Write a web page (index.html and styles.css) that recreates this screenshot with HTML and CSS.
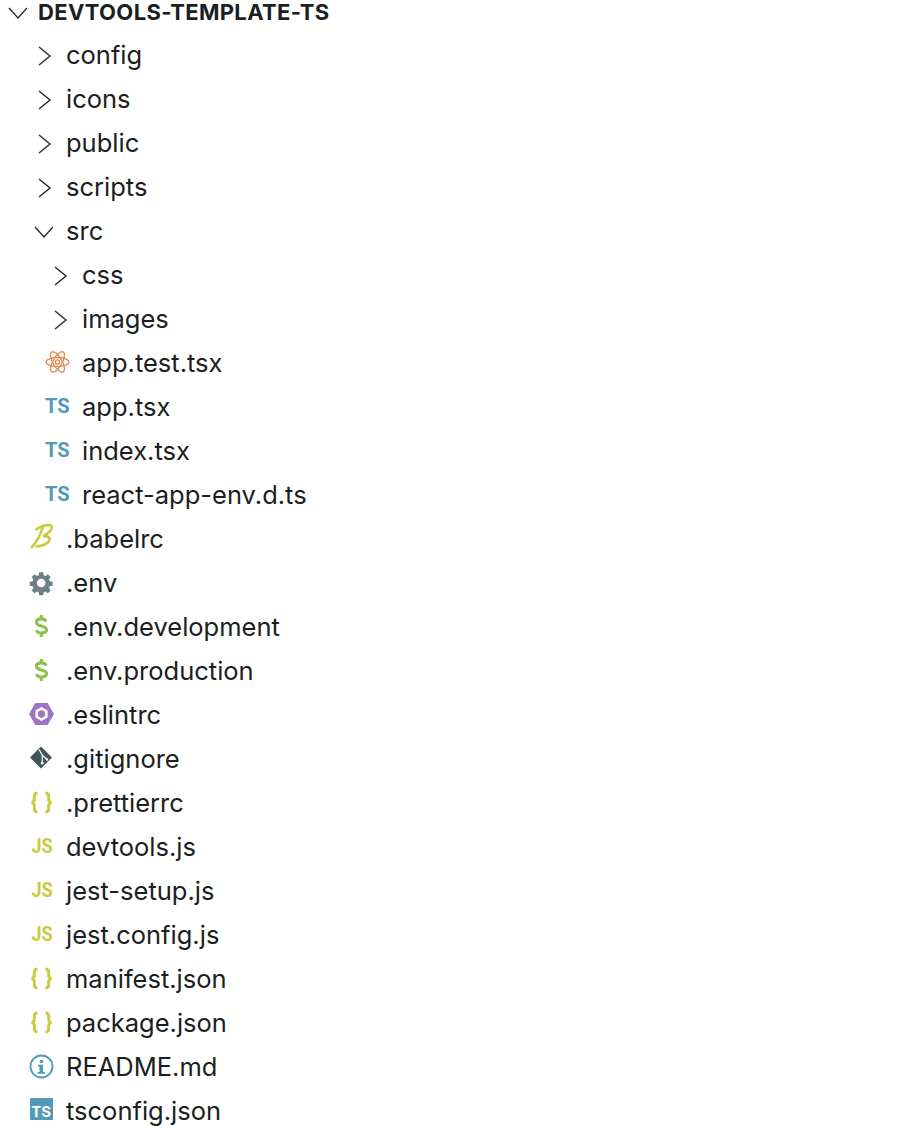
FILE: index.html
```html
<!DOCTYPE html>
<html>

<head>
  <title>Explorer</title>
  <link rel="stylesheet" href="styles.css">
</head>

<body>
  <svg class="defs" width="0" height="0">
    <symbol id="closed" viewBox="0 0 16 24"><path d="M3 4l11 9-11 9" fill="none" stroke="currentColor" stroke-width="1.500"/></symbol>
    <symbol id="open" viewBox="0 0 20 16"><path d="M2 4l9 10 9-10" fill="none" stroke="currentColor" stroke-width="1.500"/></symbol>
    <symbol id="braces" viewBox="0 0 24 24"><path d="M8.500 2c-2.600 0-3.200 1.200-3.200 3.200v3.300c0 1.800-.8 2.600-2.700 3 1.900.4 2.700 1.200 2.700 3v3.300c0 2 .6 3.200 3.200 3.200M16.500 2c2.600 0 3.200 1.200 3.200 3.200v3.300c0 1.800.8 2.600 2.700 3-1.900.4-2.700 1.200-2.700 3v3.300c0 2-.6 3.200-3.200 3.200" fill="none" stroke="#cbcb41" stroke-width="2.900"/></symbol>
    <symbol id="dollar" viewBox="0 0 24 24"><path d="M17 6.500c-.6-1.800-2.500-2.600-4.700-2.600-2.700 0-4.800 1.200-4.800 3.500 0 4.700 10 2.300 10 7.200 0 2.200-2.100 3.500-5 3.500-2.500 0-4.500-1-5.100-3M12.300 0v3.900M12.300 18.100v3.900" fill="none" stroke="#8dc149" stroke-width="3.100"/></symbol>
  </svg>

  <div class="tree">
    <div class="root">
      <svg class="arrow arrow--open"><use href="#open"/></svg>
      <span>DEVTOOLS-TEMPLATE-TS</span>
    </div>

    <div class="row"><svg class="arrow"><use href="#closed"/></svg><span class="name">config</span></div>
    <div class="row"><svg class="arrow"><use href="#closed"/></svg><span class="name">icons</span></div>
    <div class="row"><svg class="arrow"><use href="#closed"/></svg><span class="name">public</span></div>
    <div class="row"><svg class="arrow"><use href="#closed"/></svg><span class="name">scripts</span></div>
    <div class="row"><svg class="arrow arrow--open"><use href="#open"/></svg><span class="name">src</span></div>

    <div class="row row--sub"><svg class="arrow"><use href="#closed"/></svg><span class="name">css</span></div>
    <div class="row row--sub"><svg class="arrow"><use href="#closed"/></svg><span class="name">images</span></div>
    <div class="row row--sub">
      <svg class="icon" viewBox="0 0 24 24" fill="none" stroke="#e58a50" stroke-width="1.300">
        <ellipse cx="12.500" cy="11" rx="11.500" ry="4.500"/>
        <ellipse cx="12.500" cy="11" rx="11.500" ry="4.500" transform="rotate(60 12.500 11)"/>
        <ellipse cx="12.500" cy="11" rx="11.500" ry="4.500" transform="rotate(120 12.500 11)"/>
        <circle cx="12.500" cy="11" r="2.200"/>
      </svg>
      <span class="name">app.test.tsx</span>
    </div>
    <div class="row row--sub"><b class="badge badge--ts">TS</b><span class="name">app.tsx</span></div>
    <div class="row row--sub"><b class="badge badge--ts">TS</b><span class="name">index.tsx</span></div>
    <div class="row row--sub"><b class="badge badge--ts">TS</b><span class="name">react-app-env.d.ts</span></div>

    <div class="row">
      <svg class="icon" viewBox="0 0 24 24" fill="none" stroke="#cbcb41" stroke-width="2.700">
        <path d="M2 21C7 16 12 7 14.500-2M6.500 3C11-.5 17-2 21-1.800c2.500.5 2 4-.5 6.500-2 2-4.500 3.500-6.500 4.700 3-.8 6.500 0 6.500 2.800 0 3.500-7 7.500-14 7.300"/>
      </svg>
      <span class="name">.babelrc</span>
    </div>
    <div class="row">
      <svg class="icon" viewBox="0 0 24 24">
        <path fill="#6d8086" fill-rule="evenodd" d="M10.200 1.200h4l.5 3 1.700.7 2.500-1.700 2.800 2.800-1.700 2.500.7 1.700 3 .5v4l-3 .5-.7 1.700 1.700 2.500-2.800 2.800-2.500-1.700-1.700.7-.5 3h-4l-.5-3-1.700-.7-2.500 1.700-2.800-2.800 1.700-2.500-.7-1.700-3-.5v-4l3-.5.7-1.700-1.700-2.500 2.800-2.800 2.500 1.700 1.700-.7zM12.200 7.700a4.300 4.300 0 1 0 0 8.600 4.300 4.300 0 0 0 0-8.600z"/>
      </svg>
      <span class="name">.env</span>
    </div>
    <div class="row"><svg class="icon"><use href="#dollar"/></svg><span class="name">.env.development</span></div>
    <div class="row"><svg class="icon"><use href="#dollar"/></svg><span class="name">.env.production</span></div>
    <div class="row">
      <svg class="icon" viewBox="0 0 24 24">
        <path fill="#a074c4" fill-rule="evenodd" d="M6.300 0h12.400l6.300 11-6.300 11H6.300L0 11zM12.500 4L6.400 7.500v7l6.100 3.500 6.100-3.500v-7z"/>
        <path fill="#a074c4" d="M12.500 6.800l3.600 2.100v4.200l-3.600 2.100-3.600-2.100V8.900z"/>
      </svg>
      <span class="name">.eslintrc</span>
    </div>
    <div class="row">
      <svg class="icon" viewBox="0 0 24 24">
        <path fill="#41535b" d="M12 -.5L23 10.500 12 21.500 1 10.500z"/>
        <path fill="none" stroke="#fff" stroke-width="1.200" d="M10 2.500l3.200 5.500v8M13.200 8l4.800 4.500"/>
        <circle cx="13.200" cy="16" r="1.500" fill="#fff"/>
        <circle cx="18" cy="12.500" r="1.200" fill="#fff"/>
      </svg>
      <span class="name">.gitignore</span>
    </div>
    <div class="row"><svg class="icon"><use href="#braces"/></svg><span class="name">.prettierrc</span></div>
    <div class="row"><b class="badge badge--js">JS</b><span class="name">devtools.js</span></div>
    <div class="row"><b class="badge badge--js">JS</b><span class="name">jest-setup.js</span></div>
    <div class="row"><b class="badge badge--js">JS</b><span class="name">jest.config.js</span></div>
    <div class="row"><svg class="icon"><use href="#braces"/></svg><span class="name">manifest.json</span></div>
    <div class="row"><svg class="icon"><use href="#braces"/></svg><span class="name">package.json</span></div>
    <div class="row">
      <svg class="icon" viewBox="0 0 24 24">
        <circle cx="12.500" cy="11.500" r="11" fill="none" stroke="#519aba" stroke-width="1.800"/>
        <circle cx="12.500" cy="6.500" r="1.800" fill="#519aba"/>
        <path fill="#519aba" d="M9 9.700h5v7.300h2v1.700H8.500V17h2v-5.600H9z"/>
      </svg>
      <span class="name">README.md</span>
    </div>
    <div class="row">
      <span class="tsbox">TS</span>
      <span class="name">tsconfig.json</span>
    </div>
  </div>
</body>

</html>
```

FILE: styles.css
```css
body {
  margin: 0;
  background: #fff;
  color: #1b1e22;
  font-family: Inter, sans-serif;
  font-size: 25.5px;
}

.defs {
  position: absolute;
}

.tree {
  display: flex;
  flex-direction: column;
  height: 1132px;
  overflow: hidden;
}

.root {
  display: flex;
  align-items: center;
  height: 24px;
  margin-bottom: 9px;
  padding-left: 7px;
  font-size: 22px;
  font-weight: 700;
  letter-spacing: .35px;
}

.root .arrow {
  margin-right: 11px;
}

.row {
  display: flex;
  align-items: center;
  flex: none;
  height: 44px;
  padding-left: 29px;
}

.row--sub {
  padding-left: 45px;
}

.name {
  padding-bottom: 2px;
}

.arrow {
  flex: none;
  width: 16px;
  height: 24px;
  margin-left: 7px;
  margin-right: 14px;
  color: #2b2f33;
}

.arrow--open {
  width: 20px;
  height: 16px;
  margin-left: 4px;
  margin-right: 13px;
}

.root .arrow--open {
  margin-left: 0;
}

.icon {
  flex: none;
  width: 24px;
  height: 24px;
  margin-right: 13px;
  overflow: visible;
}

.badge {
  flex: none;
  width: 24px;
  margin-right: 13px;
  font-family: Roboto, sans-serif;
  font-size: 20px;
  line-height: 24px;
  text-align: center;
  position: relative;
  top: -1px;
}

.badge--ts {
  color: #519aba;
}

.badge--js {
  color: #cbcb41;
  transform: translateX(1px) scaleX(.9);
}

.tsbox {
  flex: none;
  display: flex;
  align-items: flex-end;
  justify-content: flex-end;
  box-sizing: border-box;
  width: 23px;
  height: 22px;
  margin: 0 13px 4px 1px;
  padding: 0 2px 1px 0;
  background: #519aba;
  border-radius: 1px;
  color: #fff;
  font-size: 15px;
  font-weight: 700;
  line-height: 15px;
}
```
